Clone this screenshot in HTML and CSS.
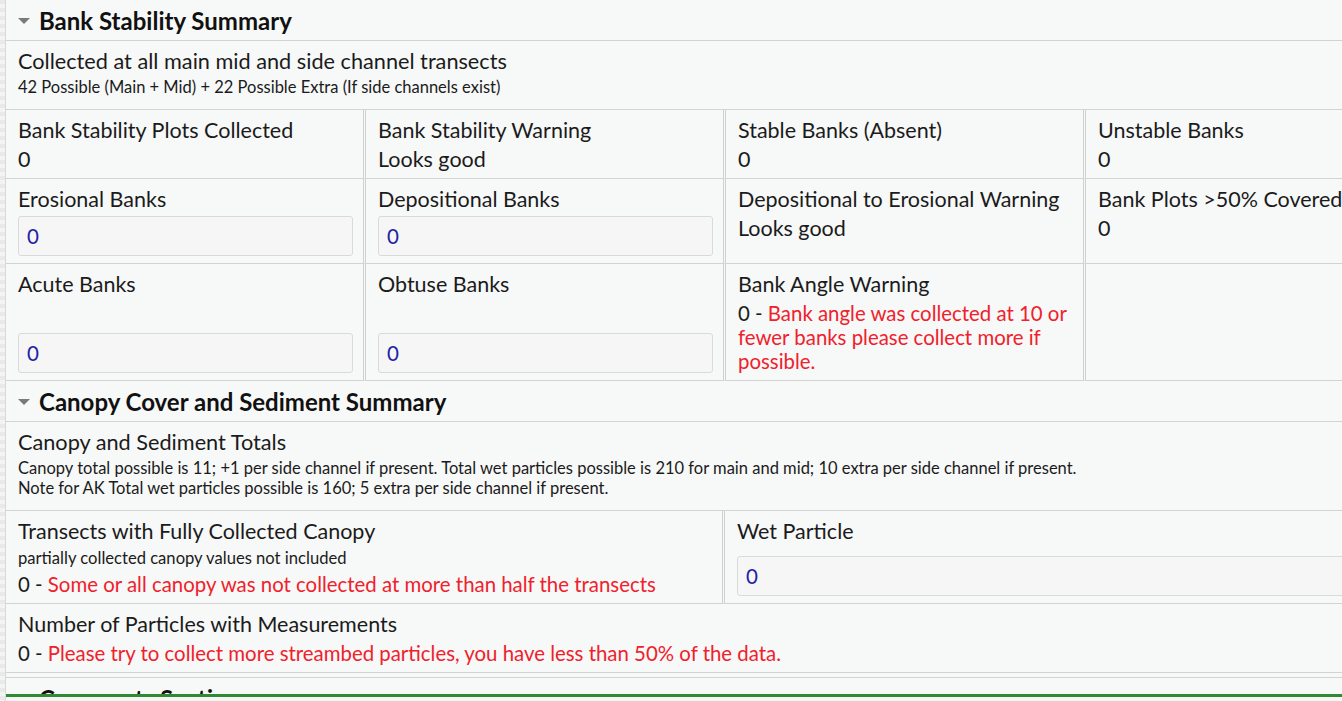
FILE: index.html
```html
<!DOCTYPE html>
<html>
<head>
<meta charset="utf-8">
<link rel="stylesheet" href="styles.css">
</head>
<body>
<div class="page">
  <section class="panel">
    <div class="sec-head">
      <span class="caret"></span>
      <h2 class="sec-title">Bank Stability Summary</h2>
    </div>
    <div class="info">
      <div class="info-title">Collected at all main mid and side channel transects</div>
      <div class="info-note">42 Possible (Main + Mid) + 22 Possible Extra (If side channels exist)</div>
    </div>
    <div class="grid grid-4">
      <div class="cell">
        <div class="label">Bank Stability Plots Collected</div>
        <div class="value">0</div>
      </div>
      <div class="cell">
        <div class="label">Bank Stability Warning</div>
        <div class="value">Looks good</div>
      </div>
      <div class="cell">
        <div class="label">Stable Banks (Absent)</div>
        <div class="value">0</div>
      </div>
      <div class="cell">
        <div class="label">Unstable Banks</div>
        <div class="value">0</div>
      </div>

      <div class="cell">
        <div class="label">Erosional Banks</div>
        <div class="input">0</div>
      </div>
      <div class="cell">
        <div class="label">Depositional Banks</div>
        <div class="input">0</div>
      </div>
      <div class="cell">
        <div class="label">Depositional to Erosional Warning</div>
        <div class="value">Looks good</div>
      </div>
      <div class="cell">
        <div class="label">Bank Plots &gt;50% Covered</div>
        <div class="value">0</div>
      </div>

      <div class="cell">
        <div class="label">Acute Banks</div>
        <div class="input">0</div>
      </div>
      <div class="cell">
        <div class="label">Obtuse Banks</div>
        <div class="input">0</div>
      </div>
      <div class="cell">
        <div class="label">Bank Angle Warning</div>
        <div class="value warn-line">0 - <span class="warn">Bank angle was collected at 10 or fewer banks please collect more if possible.</span></div>
      </div>
      <div class="cell"></div>
    </div>

    <div class="sec-head">
      <span class="caret"></span>
      <h2 class="sec-title">Canopy Cover and Sediment Summary</h2>
    </div>
    <div class="info">
      <div class="info-title">Canopy and Sediment Totals</div>
      <div class="info-note">Canopy total possible is 11; +1 per side channel if present. Total wet particles possible is 210 for main and mid; 10 extra per side channel if present.<br>Note for AK Total wet particles possible is 160; 5 extra per side channel if present.</div>
    </div>
    <div class="grid grid-2">
      <div class="cell">
        <div class="label">Transects with Fully Collected Canopy</div>
        <div class="sub">partially collected canopy values not included</div>
        <div class="value warn-line">0 - <span class="warn">Some or all canopy was not collected at more than half the transects</span></div>
      </div>
      <div class="cell">
        <div class="label">Wet Particle</div>
        <div class="input">0</div>
      </div>
    </div>
    <div class="cell full">
      <div class="label">Number of Particles with Measurements</div>
      <div class="value warn-line">0 - <span class="warn">Please try to collect more streambed particles, you have less than 50% of the data.</span></div>
    </div>

    <div class="sec-head next">
      <span class="caret"></span>
      <h2 class="sec-title">Comments Section</h2>
    </div>
  </section>
</div>
<div class="footer"></div>
</body>
</html>
```

FILE: styles.css
```css
html, body {
  margin: 0;
  padding: 0;
  overflow: hidden;
}
body {
  background: repeating-linear-gradient(180deg, #e9e9e9 0 4px, #f3f3f3 4px 8px);
  font-family: Lato, "Noto Sans", sans-serif;
  color: #1b1b1b;
  height: 701px;
}
.page {
  padding-left: 5px;
  width: 1440px;
}
.panel {
  background: #f7f8f8;
  border-left: 1px solid #d9d9d9;
  width: 1440px;
  min-height: 701px;
}
.sec-head {
  display: flex;
  align-items: center;
  height: 40px;
  border-bottom: 1px solid #d3d3d3;
  padding-left: 12px;
}
.sec-head.next {
  border-top: 1px solid #d3d3d3;
  margin-top: 4px;
}
.caret {
  width: 0;
  height: 0;
  border-left: 6px solid transparent;
  border-right: 6px solid transparent;
  border-top: 6px solid #7a7a7a;
  margin-right: 9px;
  margin-top: 1px;
}
.sec-title {
  margin: 0;
  font-size: 24px;
  font-weight: 700;
  color: #111;
}
.info {
  padding: 8px 12px 12px;
  border-bottom: 1px solid #d3d3d3;
}
.info-title {
  font-size: 21.7px;
  line-height: 24px;
  margin-bottom: 4px;
}
.info-note {
  font-size: 16.5px;
  line-height: 20px;
}
.grid {
  display: grid;
}
.grid-4 {
  grid-template-columns: 357px 360px 360px 360px;
}
.grid-2 {
  grid-template-columns: 716px 724px;
}
.cell {
  display: flex;
  flex-direction: column;
  padding: 8px 10px 7px 12px;
  border-bottom: 1px solid #d3d3d3;
  font-size: 21.5px;
  line-height: 24px;
  box-sizing: border-box;
}
.grid .cell + .cell {
  border-left: 3px double #d0d0d0;
}
.grid-4 .cell:nth-child(4n+1) {
  border-left: none;
}
.label {
  margin-bottom: 5px;
}
.sub {
  font-size: 16.6px;
  line-height: 20px;
  margin-bottom: 4px;
}
.value {
  line-height: 24px;
}
.warn-line {
  font-size: 20.4px;
}
.warn {
  color: #f0212b;
}
.input {
  margin-top: auto;
  height: 40px;
  box-sizing: border-box;
  border: 1px solid #dadada;
  border-radius: 3px;
  background: #f6f6f6;
  color: #1e22a6;
  padding: 7px 8px;
  line-height: 24px;
  font-size: 20.5px;
}
.footer {
  position: fixed;
  left: 6px;
  right: 0;
  bottom: 0;
  height: 4px;
  border-top: 3px solid #2f8a32;
  background: #f4f5f5;
}
```
